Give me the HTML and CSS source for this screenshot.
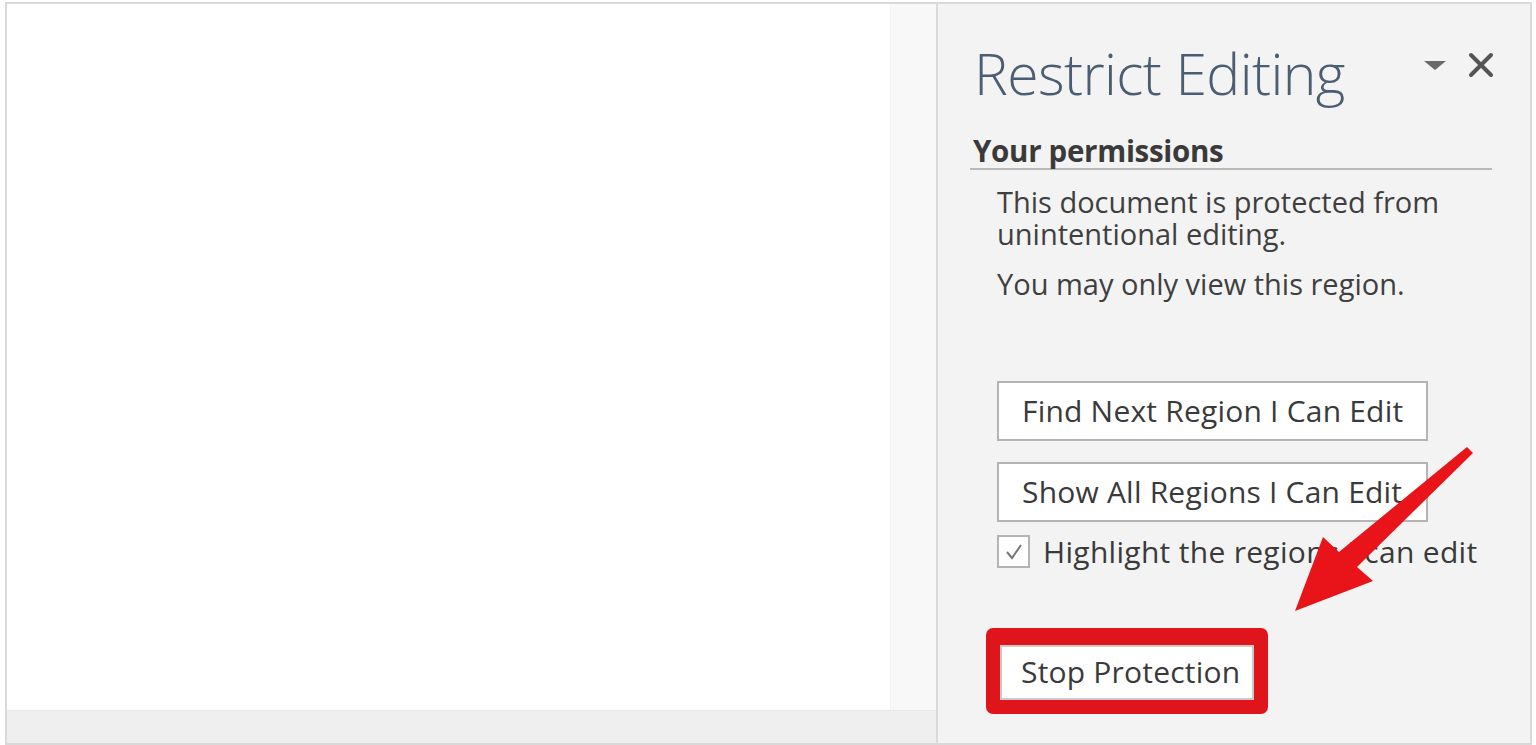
FILE: index.html
```html
<!DOCTYPE html>
<html lang="en">
<head>
<meta charset="utf-8">
<title>Restrict Editing</title>
<link rel="stylesheet" href="styles.css">
</head>
<body>
<div class="frame">
  <div class="doc-col">
    <div class="doc-main">
      <div class="doc-page"></div>
      <div class="doc-gutter"></div>
    </div>
    <div class="doc-bottom"></div>
  </div>
  <div class="divider"></div>
  <div class="panel">
    <div class="panel-head">
      <h1 class="panel-title">Restrict Editing</h1>
      <div class="panel-tools">
        <svg class="tool-drop" width="22" height="10" viewBox="0 0 22 10"><path d="M0 0 H22 L11 9 Z" fill="#6a6a6a"/></svg>
        <svg class="tool-close" width="26" height="26" viewBox="0 0 26 26"><path d="M3 3 L23 23 M23 3 L3 23" stroke="#555" stroke-width="4" stroke-linecap="round"/></svg>
      </div>
    </div>
    <div class="section-title">Your permissions</div>
    <div class="section-body">
      <p class="msg">This document is protected from unintentional editing.</p>
      <p class="msg">You may only view this region.</p>
      <div class="actions">
        <button class="btn">Find Next Region I Can Edit</button>
        <button class="btn">Show All Regions I Can Edit</button>
        <label class="check">
          <span class="box"><svg width="22" height="22" viewBox="0 0 22 22"><path d="M4 11 L9 17 L18 4" fill="none" stroke="#777" stroke-width="2"/></svg></span>
          <span>Highlight the regions I can edit</span>
        </label>
      </div>
      <div class="stop-wrap">
        <button class="btn btn-stop">Stop Protection</button>
      </div>
    </div>
  </div>
  <svg class="arrow" width="200" height="180" viewBox="0 0 200 180">
    <path d="M184 6 L190 12 L74 126 L90 140 L12 170 L40 96 L56 111 Z" fill="#e8141a"/>
  </svg>
</div>
</body>
</html>
```

FILE: styles.css
```css
* { box-sizing: border-box; }
html, body { margin: 0; padding: 0; background: #ffffff; }
body { font-family: "Open Sans", "Noto Sans", "Liberation Sans", sans-serif; }

.frame {
  position: relative;
  margin: 2px 4px 0 5px;
  height: 743px;
  border: 2px solid #d9d9d9;
  display: flex;
  background: #fff;
}

.doc-col {
  flex: 0 0 929px;
  display: flex;
  flex-direction: column;
}
.doc-main { flex: 1; display: flex; }
.doc-page { flex: 0 0 883px; background: #ffffff; }
.doc-gutter { flex: 1; background: #f8f8f8; border-left: 1px solid #f2f2f2; }
.doc-bottom { flex: 0 0 33px; background: #efefef; border-top: 1px solid #e9e9e9; }

.divider { flex: 0 0 2px; background: #dadada; }

.panel {
  flex: 1;
  background: #f3f3f3;
  padding: 34px 38px 0 36px;
  color: #3c3c3c;
}
.panel-head {
  display: flex;
  justify-content: space-between;
  align-items: flex-start;
}
.panel-title {
  margin: 0;
  font-family: "Open Sans", "Noto Sans", sans-serif;
  font-weight: 300;
  font-size: 57px;
  line-height: 70px;
  color: #4b5d72;
  letter-spacing: -0.6px;
}
.panel-tools {
  display: flex;
  align-items: center;
  gap: 22px;
  padding-top: 14px;
  margin-right: -2px;
}
.tool-drop { margin-top: 2px; }

.section-title {
  margin-top: 26px;
  font-weight: 700;
  font-size: 29.5px;
  line-height: 34px;
  color: #3a3a3a;
  padding-bottom: 0;
  border-bottom: 2px solid #b9b9b9;
  margin-left: -4px;
  padding-left: 3px;
  letter-spacing: -0.3px;
}
.section-body { padding-left: 23px; }
.msg {
  margin: 16px 0 0 0;
  font-size: 29px;
  line-height: 32px;
  color: #3f3f3f;
  max-width: 470px;
}
.msg + .msg { margin-top: 18px; }

.actions {
  margin-top: 81px;
  display: flex;
  flex-direction: column;
  align-items: flex-start;
  gap: 21px;
}
.btn {
  font-family: "Open Sans", "Noto Sans", sans-serif;
  font-size: 30px;
  letter-spacing: 0.2px;
  color: #3a3a3a;
  background: #ffffff;
  border: 2px solid #b4b4b4;
  height: 60px;
  width: 431px;
  text-align: left;
  padding: 0 0 2px 23px;
  white-space: nowrap;
}
.check {
  margin-top: -8px;
  display: flex;
  align-items: center;
  gap: 13px;
  font-size: 30px;
  letter-spacing: 0.3px;
  line-height: 33px;
  color: #3a3a3a;
  white-space: nowrap;
}
.box {
  flex: 0 0 33px;
  width: 33px;
  height: 33px;
  border: 2px solid #b4b4b4;
  background: #fff;
  display: flex;
  align-items: center;
  justify-content: center;
}

.stop-wrap {
  margin-top: 60px;
  margin-left: -11px;
  width: 282px;
  padding: 17px 14px 14px;
  background: #e0141b;
  border-radius: 7px;
}
.btn-stop {
  display: block;
  width: 100%;
  height: 55px;
  border: 2px solid #c9c9c9;
  padding-left: 19px;
}

.arrow {
  position: absolute;
  left: 1276px;
  top: 437px;
}
```
